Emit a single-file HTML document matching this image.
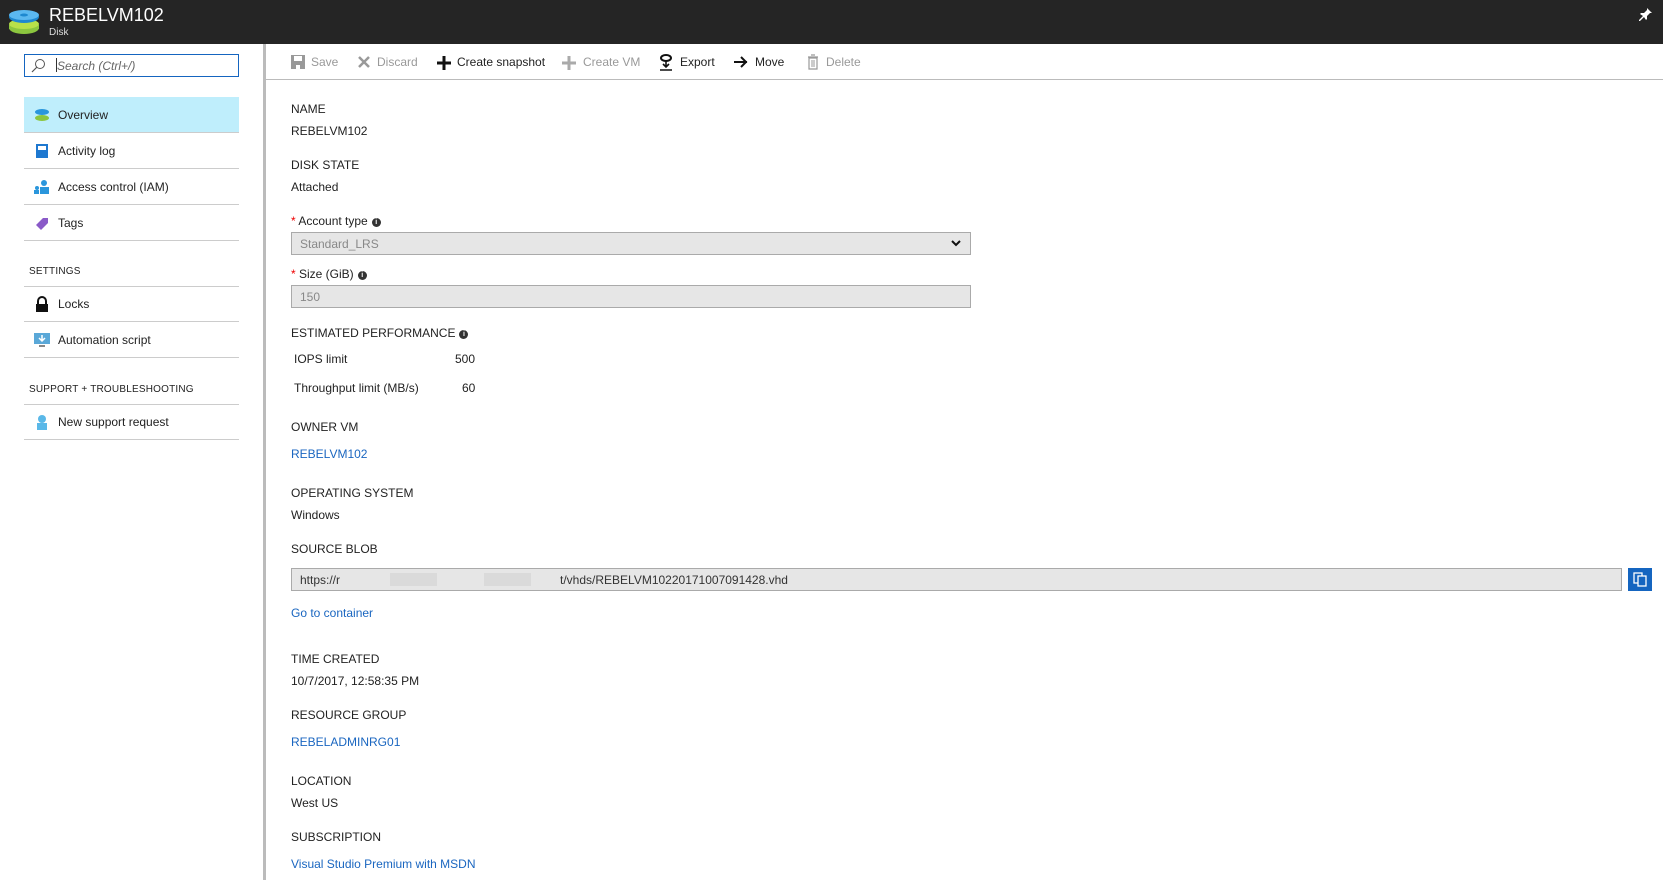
<!DOCTYPE html>
<html><head><meta charset="utf-8"><style>
*{margin:0;padding:0;box-sizing:border-box}
body{width:1663px;height:880px;overflow:hidden;background:#fff;font-family:"Liberation Sans",sans-serif;font-size:12px;color:#222;position:relative}
.a{position:absolute;white-space:nowrap}
.hdr{position:absolute;left:0;top:0;width:1663px;height:44px;background:#252525}
.row{position:absolute;left:24px;width:215px;height:36px;border-bottom:1px solid #ccc}
.row span{position:absolute;left:34px;top:11px;font-size:12px}
.row i{position:absolute;left:10px;top:10px;width:16px;height:16px}
.sec{position:absolute;left:29px;font-size:10px;letter-spacing:.2px;color:#222}
.lbl{position:absolute;left:291px;font-size:12px;color:#222}
.lnk{color:#1a66c0}
.tb{position:absolute;top:55px;font-size:12px}
.dis{color:#999}
.box{position:absolute;left:291px;background:#e6e6e6;border:1px solid #aaa;color:#888;font-size:12px;padding:4px 8px}
.info{display:inline-block;width:9px;height:9px;border-radius:50%;background:#333;color:#fff;font-size:7px;text-align:center;line-height:9px;font-weight:bold;vertical-align:1px;margin-left:4px}
.red{color:#e00}
</style></head><body>
<div class="hdr"></div>
<svg class="a" style="left:8px;top:8px" width="32" height="28" viewBox="0 0 32 28"><ellipse cx="16" cy="20" rx="15" ry="6" fill="#8cc63f"/><rect x="1" y="17" width="30" height="4" fill="#8cc63f"/><ellipse cx="16" cy="16" rx="15" ry="5" fill="#b8e04a"/><ellipse cx="16" cy="9" rx="15" ry="6" fill="#1e88d0"/><ellipse cx="16" cy="7" rx="15" ry="5" fill="#5bb8f0"/><ellipse cx="16" cy="7" rx="4" ry="1.5" fill="#1e88d0"/></svg>
<div class="a" style="left:49px;top:5px;font-size:18px;color:#fff">REBELVM102</div>
<div class="a" style="left:49px;top:27px;font-size:10px;color:#ddd">Disk</div>
<svg class="a" style="left:1638px;top:7px" width="15" height="15" viewBox="0 0 15 15"><path d="M9 1l5 5-2 0-3 3 0 3-1 1-2-3-4 4-1 0 0-1 4-4-3-2 1-1 3 0 3-3z" fill="#fff"/></svg>

<div class="a" style="left:24px;top:54px;width:215px;height:23px;border:1px solid #1565c0"></div>
<svg class="a" style="left:31px;top:58px" width="15" height="15" viewBox="0 0 15 15"><circle cx="9" cy="6" r="4.5" fill="none" stroke="#555" stroke-width="1"/><path d="M6 9l-5 5" stroke="#555" stroke-width="1.2"/></svg>
<div class="a" style="left:56px;top:58px;width:1px;height:14px;background:#333"></div>
<div class="a" style="left:57px;top:59px;font-style:italic;color:#666">Search (Ctrl+/)</div>

<div class="row" style="top:97px;background:#bfeefc;border-bottom-color:#ccc"><i><svg width="16" height="16"><ellipse cx="8" cy="11" rx="7" ry="3" fill="#8cc63f"/><ellipse cx="8" cy="5" rx="7" ry="3" fill="#2a96dc"/></svg></i><span>Overview</span></div>
<div class="row" style="top:133px"><i><svg width="16" height="16"><rect x="2" y="1" width="12" height="14" fill="#1e78d0"/><rect x="4" y="3" width="8" height="4" fill="#fff"/></svg></i><span>Activity log</span></div>
<div class="row" style="top:169px"><i><svg width="16" height="16"><circle cx="10" cy="4" r="3" fill="#2a96dc"/><rect x="6" y="8" width="9" height="7" fill="#2a96dc"/><circle cx="3" cy="9" r="2" fill="#2a96dc"/><rect x="0" y="11" width="5" height="4" fill="#2a96dc"/></svg></i><span>Access control (IAM)</span></div>
<div class="row" style="top:205px"><i><svg width="16" height="16"><path d="M2 10L9 3h5v5l-7 7z" fill="#8a5ac8"/></svg></i><span>Tags</span></div>
<div class="sec" style="top:266px">SETTINGS</div>
<div class="a" style="left:24px;top:286px;width:215px;height:1px;background:#ccc"></div>
<div class="row" style="top:286px"><i><svg width="16" height="16"><path d="M4 8V5a4 4 0 018 0v3" fill="none" stroke="#111" stroke-width="2"/><rect x="2" y="8" width="12" height="8" fill="#111"/></svg></i><span>Locks</span></div>
<div class="row" style="top:322px"><i><svg width="16" height="16"><rect x="0" y="1" width="16" height="11" fill="#5aa8d8"/><path d="M8 3v6M5 6l3 3 3-3" stroke="#fff" stroke-width="1.5" fill="none"/><rect x="5" y="13" width="6" height="2" fill="#888"/></svg></i><span>Automation script</span></div>
<div class="sec" style="top:384px">SUPPORT + TROUBLESHOOTING</div>
<div class="a" style="left:24px;top:404px;width:215px;height:1px;background:#ccc"></div>
<div class="row" style="top:404px"><i><svg width="16" height="16"><circle cx="8" cy="5" r="4" fill="#5ab8e8"/><rect x="3" y="9" width="10" height="7" fill="#5ab8e8"/></svg></i><span>New support request</span></div>

<div class="a" style="left:263px;top:44px;width:3px;height:836px;background:#bbb"></div>
<div class="a" style="left:266px;top:79px;width:1397px;height:1px;background:#bbb"></div>

<svg class="a" style="left:290px;top:54px" width="16" height="16"><rect x="1" y="1" width="14" height="14" fill="#999"/><rect x="4" y="2" width="8" height="5" fill="#fff"/><rect x="6" y="11" width="4" height="4" fill="#fff"/></svg>
<div class="tb dis" style="left:311px">Save</div>
<svg class="a" style="left:357px;top:55px" width="14" height="14"><path d="M2 2l10 10M12 2L2 12" stroke="#999" stroke-width="2.5"/></svg>
<div class="tb dis" style="left:377px">Discard</div>
<svg class="a" style="left:436px;top:55px" width="16" height="16"><path d="M8 1v14M1 8h14" stroke="#111" stroke-width="3"/></svg>
<div class="tb" style="left:457px">Create snapshot</div>
<svg class="a" style="left:561px;top:55px" width="16" height="16"><path d="M8 1v14M1 8h14" stroke="#aaa" stroke-width="3"/></svg>
<div class="tb dis" style="left:583px">Create VM</div>
<svg class="a" style="left:658px;top:54px" width="16" height="17"><ellipse cx="8" cy="4" rx="5" ry="3" fill="none" stroke="#111" stroke-width="2"/><path d="M8 7v6M5 10l3 3 3-3M2 16h12" stroke="#111" stroke-width="1.6" fill="none"/></svg>
<div class="tb" style="left:680px">Export</div>
<svg class="a" style="left:733px;top:55px" width="16" height="14"><path d="M1 7h13M8 2l5 5-5 5" stroke="#111" stroke-width="2" fill="none"/></svg>
<div class="tb" style="left:755px">Move</div>
<svg class="a" style="left:806px;top:54px" width="14" height="16"><path d="M2 3h10M5 1h4M3 4h8v11H3z" stroke="#999" stroke-width="1.2" fill="none"/><path d="M6 6v7M8 6v7" stroke="#999"/></svg>
<div class="tb dis" style="left:826px">Delete</div>

<div class="lbl" style="top:102px">NAME</div>
<div class="lbl" style="top:124px">REBELVM102</div>
<div class="lbl" style="top:158px">DISK STATE</div>
<div class="lbl" style="top:180px">Attached</div>
<div class="lbl" style="top:214px"><span class="red">*</span> Account type<span class="info">i</span></div>
<div class="box" style="top:232px;width:680px;height:23px">Standard_LRS</div>
<svg class="a" style="left:950px;top:239px" width="12" height="10"><path d="M2 2l4 4 4-4" stroke="#111" stroke-width="2" fill="none"/></svg>
<div class="lbl" style="top:267px"><span class="red">*</span> Size (GiB)<span class="info">i</span></div>
<div class="box" style="top:285px;width:680px;height:23px">150</div>
<div class="lbl" style="top:326px">ESTIMATED PERFORMANCE<span class="info">i</span></div>
<div class="lbl" style="top:352px;left:294px">IOPS limit</div>
<div class="lbl" style="top:352px;left:455px">500</div>
<div class="lbl" style="top:381px;left:294px">Throughput limit (MB/s)</div>
<div class="lbl" style="top:381px;left:462px">60</div>
<div class="lbl" style="top:420px">OWNER VM</div>
<div class="lbl lnk" style="top:447px">REBELVM102</div>
<div class="lbl" style="top:486px">OPERATING SYSTEM</div>
<div class="lbl" style="top:508px">Windows</div>
<div class="lbl" style="top:542px">SOURCE BLOB</div>
<div class="box" style="top:568px;width:1331px;height:23px;color:#333">https://r<span style="display:inline-block;width:220px"></span>t/vhds/REBELVM10220171007091428.vhd</div>
<div class="a" style="left:390px;top:573px;width:47px;height:13px;background:#dadada"></div>
<div class="a" style="left:484px;top:573px;width:47px;height:13px;background:#dadada"></div>
<div class="a" style="left:1628px;top:568px;width:24px;height:23px;background:#1565c0"></div>
<svg class="a" style="left:1632px;top:571px" width="16" height="17"><rect x="2" y="2" width="8" height="10" fill="none" stroke="#fff" stroke-width="1.3"/><rect x="6" y="5" width="8" height="10" fill="#1565c0" stroke="#fff" stroke-width="1.3"/></svg>
<div class="lbl lnk" style="top:606px">Go to container</div>
<div class="lbl" style="top:652px">TIME CREATED</div>
<div class="lbl" style="top:674px">10/7/2017, 12:58:35 PM</div>
<div class="lbl" style="top:708px">RESOURCE GROUP</div>
<div class="lbl lnk" style="top:735px">REBELADMINRG01</div>
<div class="lbl" style="top:774px">LOCATION</div>
<div class="lbl" style="top:796px">West US</div>
<div class="lbl" style="top:830px">SUBSCRIPTION</div>
<div class="lbl lnk" style="top:857px">Visual Studio Premium with MSDN</div>
</body></html>
